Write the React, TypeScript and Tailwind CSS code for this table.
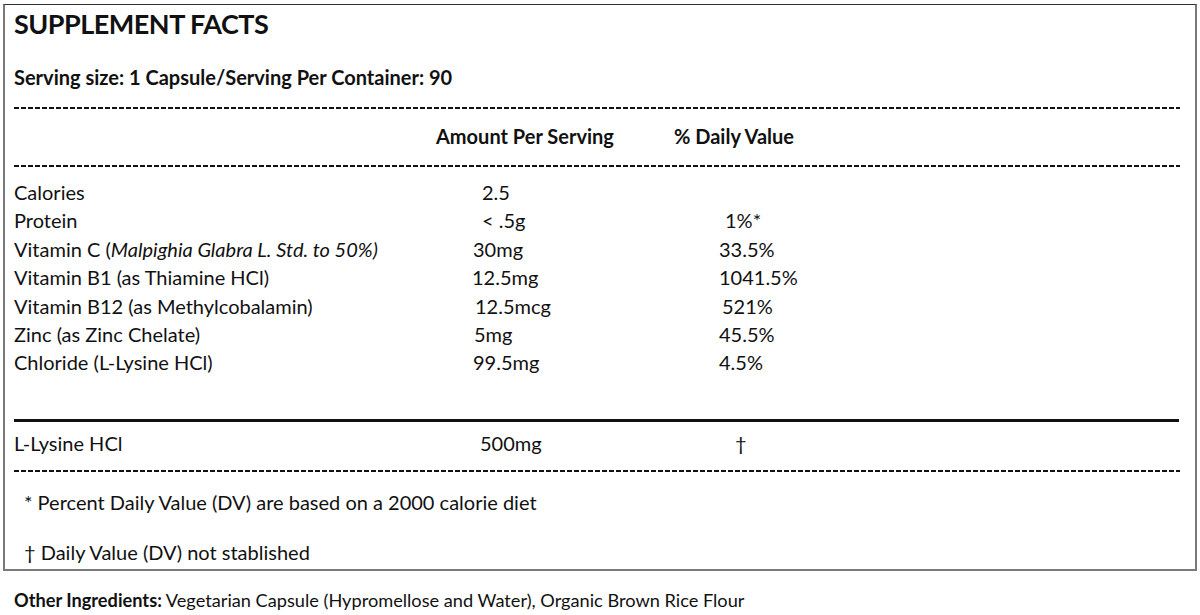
import React from 'react';

const rows = [
  { label: 'Calories', amount: '2.5', amt: 'pl-[46px]', dv: '', dvp: 'pl-[51px]' },
  { label: 'Protein', amount: '< .5g', amt: 'pl-[46px]', dv: '1%*', dvp: 'pl-[51px]' },
  { label: 'Vitamin C', italic: 'Malpighia Glabra L. Std. to 50%)', amount: '30mg', amt: 'pl-[37px]', dv: '33.5%', dvp: 'pl-[45px]' },
  { label: 'Vitamin B1 (as Thiamine HCl)', amount: '12.5mg', amt: 'pl-[36px]', dv: '1041.5%', dvp: 'pl-[45px]' },
  { label: 'Vitamin B12 (as Methylcobalamin)', amount: '12.5mcg', amt: 'pl-[39px]', dv: '521%', dvp: 'pl-[48px]' },
  { label: 'Zinc (as Zinc Chelate)', amount: '5mg', amt: 'pl-[38px]', dv: '45.5%', dvp: 'pl-[45px]' },
  { label: 'Chloride (L-Lysine HCl)', amount: '99.5mg', amt: 'pl-[37px]', dv: '4.5%', dvp: 'pl-[45px]' },
];

function Dashes() {
  return <div className="h-[2px] w-[1166px] bg-[repeating-linear-gradient(90deg,#111_0px,#111_5px,transparent_5px,transparent_7px)]" />;
}

export default function App() {
  return (
    <div className="w-[1200px] h-[615px] bg-white text-[#111] font-['Lato',sans-serif] pt-[4px] pl-[3px] overflow-hidden">
      <div className="w-[1194px] h-[567px] border-t border-t-[#333] border-l-2 border-r-2 border-b-2 border-[#7a7a7a] pl-[9px] flex flex-col">
        <h1 className="text-[27px] font-bold leading-[38px] tracking-[-0.5px]">SUPPLEMENT FACTS</h1>
        <p className="text-[20px] font-bold leading-[24px] mt-[22px]">Serving size: 1 Capsule/Serving Per Container: 90</p>
        <div className="mt-[18px]"><Dashes /></div>
        <div className="grid grid-cols-[422px_238px_1fr] h-[56px] items-center pb-[3px] text-[20px] font-bold">
          <span />
          <span>Amount Per Serving</span>
          <span>% Daily Value</span>
        </div>
        <Dashes />
        <div className="mt-[11px] text-[20px] leading-[28.4px]">
          {rows.map((r) => (
            <div key={r.label} className="grid grid-cols-[422px_238px_1fr]">
              <span>
                {r.label}
                {r.italic && (
                  <>
                    {' ('}
                    <i>{r.italic}</i>
                  </>
                )}
              </span>
              <span className={r.amt}>{r.amount}</span>
              <span className={r.dvp}>{r.dv}</span>
            </div>
          ))}
        </div>
        <div className="mt-[42px] h-[3px] w-[1165px] bg-[#111]" />
        <div className="grid grid-cols-[422px_238px_1fr] h-[48px] items-center pb-[5px] text-[20px]">
          <span>L-Lysine HCl</span>
          <span className="pl-[44px]">500mg</span>
          <span className="pl-[61px]">†</span>
        </div>
        <Dashes />
        <p className="text-[20px] leading-[28px] pl-[10px] mt-[16px]">* Percent Daily Value (DV) are based on a 2000 calorie diet</p>
        <p className="text-[20px] leading-[28px] pl-[10px] mt-[22px]">† Daily Value (DV) not stablished</p>
      </div>
      <p className="text-[18.2px] leading-[24px] pl-[11px] mt-[17px]">
        <b>Other Ingredients:</b> Vegetarian Capsule (Hypromellose and Water), Organic Brown Rice Flour
      </p>
    </div>
  );
}
